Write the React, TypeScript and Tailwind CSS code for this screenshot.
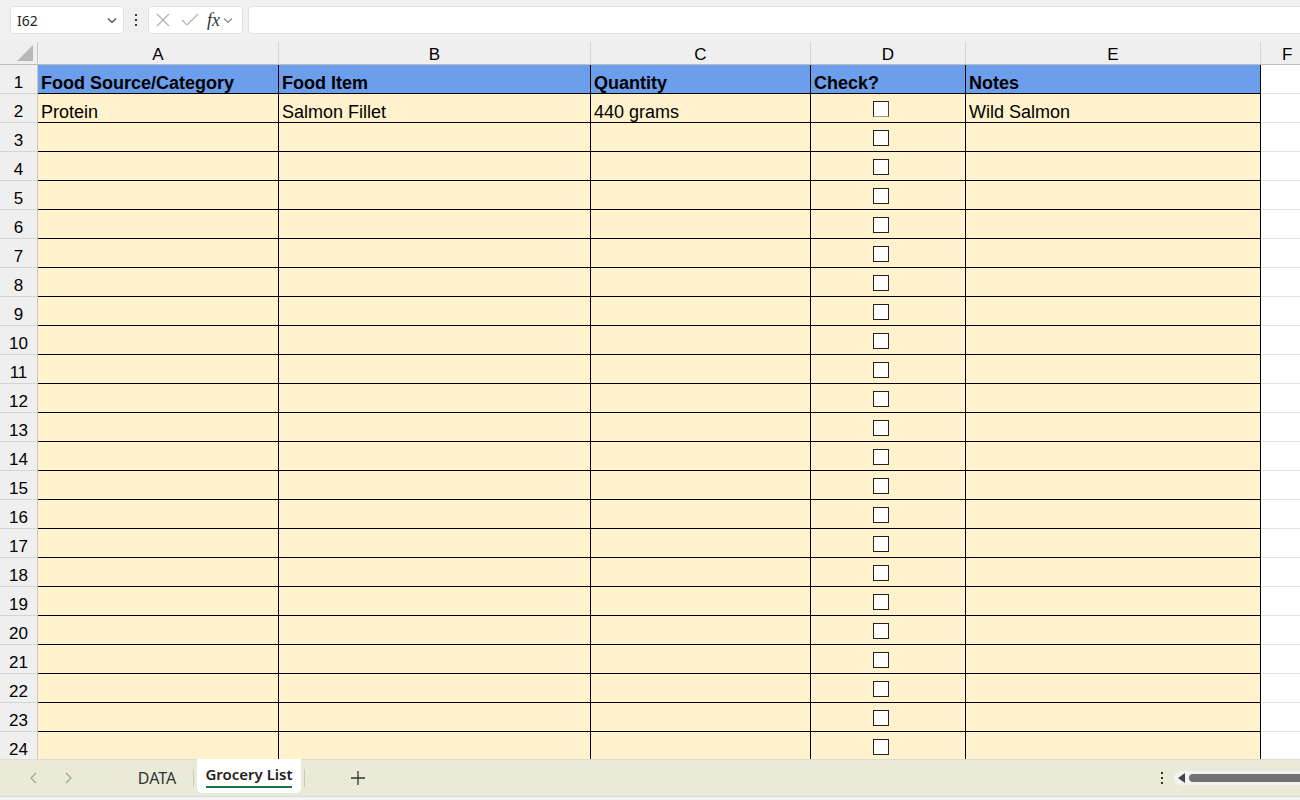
import React from "react";

const cols = [
  { key: "A", w: 241 },
  { key: "B", w: 312 },
  { key: "C", w: 220 },
  { key: "D", w: 155 },
  { key: "E", w: 295 },
];

const headerRow = ["Food Source/Category", "Food Item", "Quantity", "Check?", "Notes"];
const row2 = ["Protein", "Salmon Fillet", "440 grams", "", "Wild Salmon"];

function Checkbox({ first }: { first?: boolean }) {
  return (
    <div
      className={
        "w-[16px] h-[16px] bg-white border border-[#222] " +
        (first ? "border-b-[#999] border-r-[#444]" : "")
      }
    />
  );
}

export default function App() {
  const rows = Array.from({ length: 24 }, (_, i) => i + 1);
  return (
    <div
      className="w-[1300px] h-[800px] overflow-hidden bg-white flex flex-col text-black"
      style={{ fontFamily: '"Liberation Sans", Arial, sans-serif' }}
    >
      {/* formula bar */}
      <div className="h-[42px] bg-[#f0f0f0] flex items-start pt-[6px] pl-[10px] gap-0 shrink-0">
        <div className="w-[114px] h-[28px] bg-white rounded-[4px] border border-[#e0e0e0] flex items-center pl-[6px] pr-[5px] justify-between">
          <span className="text-[14px] text-[#222]" style={{ fontFamily: '"Segoe UI", "Noto Sans", sans-serif' }}>I62</span>
          <svg width="12" height="12" viewBox="0 0 12 12" fill="none" stroke="#444" strokeWidth="1.2">
            <path d="M2 4.5l4 4 4-4" />
          </svg>
        </div>
        <div className="w-[24px] h-[28px] flex items-center justify-center">
          <svg width="4" height="14" viewBox="0 0 4 14" fill="#333">
            <rect x="1" y="1" width="2" height="2" />
            <rect x="1" y="6" width="2" height="2" />
            <rect x="1" y="11" width="2" height="2" />
          </svg>
        </div>
        <div className="w-[95px] h-[28px] bg-white rounded-[4px] border border-[#e0e0e0] flex items-center pl-[6px] gap-0">
          <svg width="16" height="16" viewBox="0 0 16 16" fill="none" stroke="#b0b0b0" strokeWidth="1.2">
            <path d="M2 2l12 12M14 2L2 14" />
          </svg>
          <svg width="20" height="16" viewBox="0 0 20 16" fill="none" stroke="#b0b0b0" strokeWidth="1.2" className="ml-[9px]">
            <path d="M2 8l5 5L18 2" />
          </svg>
          <span className="ml-[7px] text-[18px] italic text-[#333] leading-none" style={{ fontFamily: '"Liberation Serif", "Times New Roman", serif' }}>
            fx
          </span>
          <svg width="12" height="12" viewBox="0 0 12 12" fill="none" stroke="#888" strokeWidth="1.1" className="ml-[2px]">
            <path d="M2 4.5l4 4 4-4" />
          </svg>
        </div>
        <div className="ml-[5px] flex-1 h-[28px] bg-white rounded-l-[4px] border border-r-0 border-[#e0e0e0]" />
      </div>

      {/* grid */}
      <div className="flex-1 overflow-hidden text-[18px] leading-none">
        {/* column header row */}
        <div className="flex h-[23px] bg-[#efefef] border-b border-[#bdbdbd]">
          <div className="w-[38px] shrink-0 border-r border-[#c8c8c8] relative">
            <svg width="16" height="16" viewBox="0 0 16 16" className="absolute right-[4px] bottom-[3px]">
              <polygon points="16,0 16,16 0,16" fill="#b8b8b8" />
            </svg>
          </div>
          {cols.map((c) => (
            <div
              key={c.key}
              style={{ width: c.w }}
              className="shrink-0 border-r border-[#d4d4d4] flex items-center justify-center text-[17px] pt-[2px]"
            >
              {c.key}
            </div>
          ))}
          <div className="flex-1 flex items-center justify-start pl-[21px] text-[17px] pt-[2px]">F</div>
        </div>

        {rows.map((r) => (
          <div key={r} className="flex h-[29px]">
            <div className="w-[38px] shrink-0 bg-[#efefef] border-r border-[#c8c8c8] border-b border-b-[#d4d4d4] flex items-end pb-[2px] justify-center text-[17px]">
              {r}
            </div>
            {cols.map((c, ci) => {
              const isHead = r === 1;
              let content: React.ReactNode = null;
              if (r === 1) content = <span className="font-bold">{headerRow[ci]}</span>;
              else if (r === 2 && ci !== 3) content = row2[ci];
              if (r >= 2 && ci === 3) content = <Checkbox first={r === 2} />;
              const isCheck = ci === 3 && r >= 2;
              return (
                <div
                  key={c.key}
                  style={{ width: c.w }}
                  className={
                    "shrink-0 border-r border-b border-black flex " +
                    (isCheck ? "items-center pl-[62px] pt-[1px] " : "items-end pl-[3px] pb-[1px] ") +
                    (isHead ? "bg-[#6d9eeb]" : "bg-[#fff2cc]")
                  }
                >
                  {content}
                </div>
              );
            })}
            <div className="flex-1 border-b border-[#e1e1e1]" />
          </div>
        ))}
      </div>

      {/* sheet tabs */}
      <div className="h-[37px] shrink-0 bg-[#e9ebd8] border-t border-[#dcdcd0] flex items-stretch relative">
        <div className="w-[105px] flex items-center pl-[28px] gap-[22px]">
          <svg width="12" height="14" viewBox="0 0 12 14" fill="none" stroke="#a0a0a0" strokeWidth="1.2">
            <path d="M8 2L3 7l5 5" />
          </svg>
          <svg width="12" height="14" viewBox="0 0 12 14" fill="none" stroke="#a0a0a0" strokeWidth="1.2">
            <path d="M4 2l5 5-5 5" />
          </svg>
        </div>
        <div
          className="w-[88px] flex items-center justify-center text-[16px] text-[#333]"
          style={{ fontFamily: '"Segoe UI", "Noto Sans", "Open Sans", sans-serif' }}
        >
          <span className="ml-[16px]">DATA</span>
        </div>
        <div className="w-px bg-[#c8c8c0] my-[9px]" />
        <div
          className="w-[104px] ml-[3px] mb-[3px] bg-white rounded-b-[5px] flex flex-col items-center justify-center text-[15px] text-[#222] font-semibold -mt-px"
          style={{ fontFamily: '"Segoe UI", "Noto Sans", "Open Sans", sans-serif' }}
        >
          <span className="leading-[18px]">Grocery List</span>
          <div className="w-[86px] h-[2px] bg-[#1e7145] mt-[3px]" />
        </div>
        <div className="w-px bg-[#c8c8c0] my-[9px] ml-[3px]" />
        <div className="w-[106px] flex items-center justify-center">
          <svg width="14" height="14" viewBox="0 0 14 14" fill="none" stroke="#333" strokeWidth="1.3">
            <path d="M7 0v14M0 7h14" />
          </svg>
        </div>
        <div className="flex-1" />
        <div className="w-[16px] flex items-center justify-center mr-[4px]">
          <svg width="4" height="14" viewBox="0 0 4 14" fill="#333">
            <rect x="1" y="1" width="2" height="2" />
            <rect x="1" y="6" width="2" height="2" />
            <rect x="1" y="11" width="2" height="2" />
          </svg>
        </div>
        <div className="w-[126px] flex items-center">
          <div className="w-full h-[14px] bg-[#f3f3f3] rounded-l-full flex items-center pl-[4px]">
            <svg width="8" height="10" viewBox="0 0 8 10" fill="#444">
              <polygon points="7,0 7,10 0,5" />
            </svg>
            <div className="ml-[3px] flex-1 h-[8px] bg-[#727272] rounded-l-full" />
          </div>
        </div>
      </div>
      <div className="h-[4px] shrink-0 bg-[#f3f3f3] border-t border-[#d8d8d8]" />
    </div>
  );
}
